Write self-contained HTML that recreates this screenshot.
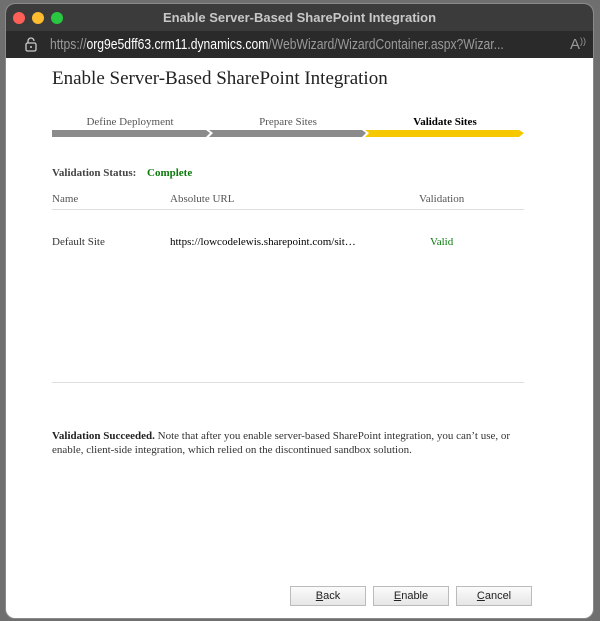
<!DOCTYPE html>
<html><head><style>
body{margin:0;width:600px;height:621px;background:#6f6f6f;overflow:hidden;position:relative;font-family:"Liberation Serif",serif}
.win{position:absolute;left:5px;top:3px;width:589px;height:616px;background:#fff;border-radius:10px;overflow:hidden;border:1px solid #8a8a8a;box-sizing:border-box}
.tb{position:absolute;left:0;top:0;right:0;height:27px;background:#3b3b3c}
.ab{position:absolute;left:0;top:27px;right:0;height:27px;background:#2a2a2a}
.dot{position:absolute;top:8px;width:12px;height:12px;border-radius:50%}
.t{position:absolute;color:#c8c8c8;font:bold 13px "Liberation Sans",sans-serif;top:6px;left:0;right:0;text-align:center}
.url{position:absolute;left:44px;top:5px;font:15px "Liberation Sans",sans-serif;color:#9a9a9a;white-space:nowrap;transform:scaleX(.81);transform-origin:0 0}
.url b{font-weight:normal;color:#fff}
.a{position:absolute;font-size:13px;color:#555}
</style></head><body>
<div class="win">
<div class="tb"><div class="dot" style="left:7px;background:#fe5f57"></div><div class="dot" style="left:26px;background:#febc2e"></div><div class="dot" style="left:45px;background:#28c840"></div><div class="t">Enable Server-Based SharePoint Integration</div></div>
<div class="ab"><svg style="position:absolute;left:19px;top:6px" width="12" height="15"><rect x="1" y="6" width="10" height="8" rx="1.5" fill="none" stroke="#ccc" stroke-width="1.3"/><path d="M3 6V4a3 3 0 0 1 6 0" fill="none" stroke="#ccc" stroke-width="1.3"/><circle cx="6" cy="10" r="1" fill="#ccc"/></svg>
<div class="url">https://<b>org9e5dff63.crm11.dynamics.com</b>/WebWizard/WizardContainer.aspx?Wizar...</div>
<div style="position:absolute;left:562px;top:5px;color:#999;font:15px 'Liberation Sans',sans-serif;background:#2a2a2a;padding-left:2px">A<span style="font-size:9px;vertical-align:top">))</span></div></div>
<div style="position:absolute;left:46px;top:64px;font-size:19px;color:#222">Enable Server-Based SharePoint Integration</div>
<div class="a" style="left:46px;top:112px;width:156px;text-align:center;font-size:11px;color:#555">Define Deployment</div>
<div class="a" style="left:204px;top:112px;width:156px;text-align:center;font-size:11px;color:#555">Prepare Sites</div>
<div class="a" style="left:361px;top:112px;width:156px;text-align:center;font-size:11px;color:#000;font-weight:bold">Validate Sites</div>
<svg style="position:absolute;left:46px;top:125px" width="480" height="10">
<polygon points="0,1 154,1 158,4 154,8 0,8" fill="#8b8b8b"/>
<polygon points="157,1 310,1 314,4 310,8 157,8 161,4" fill="#8b8b8b"/>
<polygon points="313,1 467,1 472,4 467,8 313,8 317,4" fill="#f5c800"/></svg>
<div class="a" style="left:46px;top:163px;font-weight:bold;font-size:11px;color:#444">Validation Status:</div>
<div class="a" style="left:141px;top:163px;font-weight:bold;font-size:11px;color:#0b7a0b">Complete</div>
<div class="a" style="left:46px;top:189px;font-size:11px;color:#555">Name</div>
<div class="a" style="left:164px;top:189px;font-size:11px;color:#555">Absolute URL</div>
<div class="a" style="left:413px;top:189px;font-size:11px;color:#555">Validation</div>
<div style="position:absolute;left:46px;top:205px;width:472px;height:1px;background:#ddd"></div>
<div class="a" style="left:46px;top:232px;font-size:11px;color:#333">Default Site</div>
<div class="a" style="left:164px;top:232px;font-size:11px;color:#000">https://lowcodelewis.sharepoint.com/sit…</div>
<div class="a" style="left:424px;top:232px;font-size:11px;color:#0b7a0b">Valid</div>
<div style="position:absolute;left:46px;top:378px;width:472px;height:1px;background:#ddd"></div>
<div class="a" style="left:46px;top:425px;width:480px;font-size:11px;color:#333;line-height:14px"><b style="color:#222">Validation Succeeded.</b> Note that after you enable server-based SharePoint integration, you can’t use, or enable, client-side integration, which relied on the discontinued sandbox solution.</div>
<div style="position:absolute;top:582px;left:284px;display:flex;gap:7px;font:11px 'Liberation Sans',sans-serif;color:#222">
<div style="width:74px;height:18px;border:1px solid #bbb;background:linear-gradient(#fbfbfb,#e6e6e6);text-align:center;line-height:18px"><u>B</u>ack</div>
<div style="width:74px;height:18px;border:1px solid #bbb;background:linear-gradient(#fbfbfb,#e6e6e6);text-align:center;line-height:18px"><u>E</u>nable</div>
<div style="width:74px;height:18px;border:1px solid #bbb;background:linear-gradient(#fbfbfb,#e6e6e6);text-align:center;line-height:18px"><u>C</u>ancel</div>
</div>
</div>
</body></html>
